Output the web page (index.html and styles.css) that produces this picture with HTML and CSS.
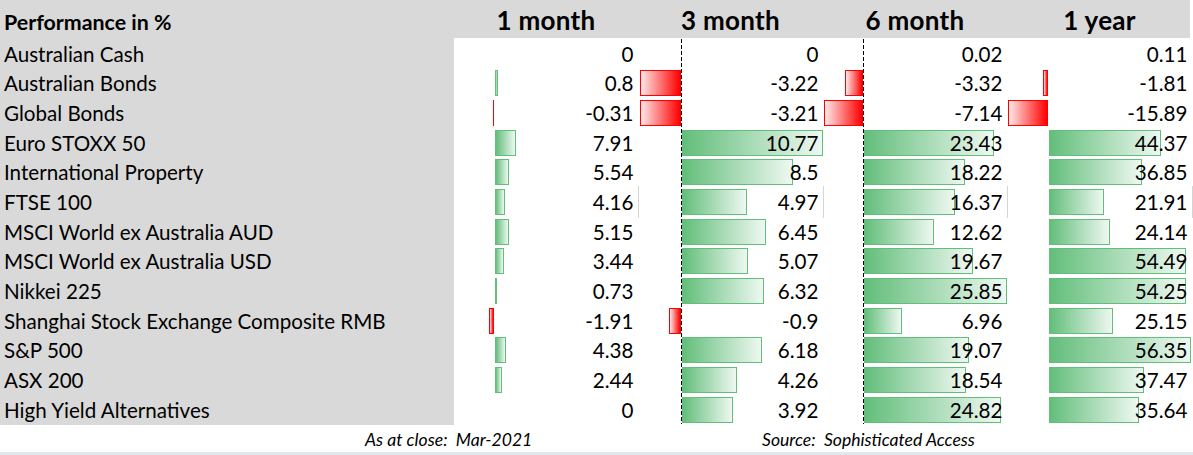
FILE: index.html
```html
<!DOCTYPE html>
<html>
<head>
<meta charset="utf-8">
<link rel="stylesheet" href="styles.css">
</head>
<body>
<div class="sheet">
  <div class="row head">
    <div class="htitle">Performance in %</div>
    <div class="hcol">1 month</div>
    <div class="hcol">3 month</div>
    <div class="hcol">6 month</div>
    <div class="hcol">1 year</div>
  </div>
  <div class="body">
    <div class="row">
      <div class="label">Australian Cash</div>
      <div class="cell c1"><div class="track"><div class="neg"></div><div class="axis"></div><div class="pos"></div></div><span class="val">0</span></div>
      <div class="cell c2"><div class="track"><div class="neg"></div><div class="axis"></div><div class="pos"></div></div><span class="val">0</span></div>
      <div class="cell c3"><div class="track"><div class="neg"></div><div class="axis"></div><div class="pos"></div></div><span class="val">0.02</span></div>
      <div class="cell c4"><div class="track"><div class="neg"></div><div class="axis"></div><div class="pos"></div></div><span class="val">0.11</span></div>
    </div>
    <div class="row">
      <div class="label">Australian Bonds</div>
      <div class="cell c1"><div class="track"><div class="neg"></div><div class="axis"></div><div class="pos"><div class="bar up" style="width:3px"></div></div></div><span class="val">0.8</span></div>
      <div class="cell c2"><div class="track"><div class="neg"><div class="bar down" style="width:41px"></div></div><div class="axis"></div><div class="pos"></div></div><span class="val">-3.22</span></div>
      <div class="cell c3"><div class="track"><div class="neg"><div class="bar down" style="width:18px"></div></div><div class="axis"></div><div class="pos"></div></div><span class="val">-3.32</span></div>
      <div class="cell c4"><div class="track"><div class="neg"><div class="bar down" style="width:5px"></div></div><div class="axis"></div><div class="pos"></div></div><span class="val">-1.81</span></div>
    </div>
    <div class="row">
      <div class="label">Global Bonds</div>
      <div class="cell c1"><div class="track"><div class="neg"><div class="bar down thin" style="width:1px"></div></div><div class="axis"></div><div class="pos"></div></div><span class="val">-0.31</span></div>
      <div class="cell c2"><div class="track"><div class="neg"><div class="bar down" style="width:41px"></div></div><div class="axis"></div><div class="pos"></div></div><span class="val">-3.21</span></div>
      <div class="cell c3"><div class="track"><div class="neg"><div class="bar down" style="width:39px"></div></div><div class="axis"></div><div class="pos"></div></div><span class="val">-7.14</span></div>
      <div class="cell c4"><div class="track"><div class="neg"><div class="bar down" style="width:40px"></div></div><div class="axis"></div><div class="pos"></div></div><span class="val">-15.89</span></div>
    </div>
    <div class="row">
      <div class="label">Euro STOXX 50</div>
      <div class="cell c1"><div class="track"><div class="neg"></div><div class="axis"></div><div class="pos"><div class="bar up" style="width:21px"></div></div></div><span class="val">7.91</span></div>
      <div class="cell c2"><div class="track"><div class="neg"></div><div class="axis"></div><div class="pos"><div class="bar up" style="width:141px"></div></div></div><span class="val">10.77</span></div>
      <div class="cell c3"><div class="track"><div class="neg"></div><div class="axis"></div><div class="pos"><div class="bar up" style="width:130px"></div></div></div><span class="val">23.43</span></div>
      <div class="cell c4"><div class="track"><div class="neg"></div><div class="axis"></div><div class="pos"><div class="bar up" style="width:112px"></div></div></div><span class="val">44.37</span></div>
    </div>
    <div class="row">
      <div class="label">International Property</div>
      <div class="cell c1"><div class="track"><div class="neg"></div><div class="axis"></div><div class="pos"><div class="bar up" style="width:14px"></div></div></div><span class="val">5.54</span></div>
      <div class="cell c2"><div class="track"><div class="neg"></div><div class="axis"></div><div class="pos"><div class="bar up" style="width:111px"></div></div></div><span class="val">8.5</span></div>
      <div class="cell c3"><div class="track"><div class="neg"></div><div class="axis"></div><div class="pos"><div class="bar up" style="width:101px"></div></div></div><span class="val">18.22</span></div>
      <div class="cell c4"><div class="track"><div class="neg"></div><div class="axis"></div><div class="pos"><div class="bar up" style="width:93px"></div></div></div><span class="val">36.85</span></div>
    </div>
    <div class="row sel">
      <div class="label">FTSE 100</div>
      <div class="cell c1"><div class="track"><div class="neg"></div><div class="axis"></div><div class="pos"><div class="bar up" style="width:10px"></div></div></div><span class="val">4.16</span></div>
      <div class="cell c2"><div class="track"><div class="neg"></div><div class="axis"></div><div class="pos"><div class="bar up" style="width:65px"></div></div></div><span class="val">4.97</span></div>
      <div class="cell c3"><div class="track"><div class="neg"></div><div class="axis"></div><div class="pos"><div class="bar up" style="width:91px"></div></div></div><span class="val">16.37</span></div>
      <div class="cell c4"><div class="track"><div class="neg"></div><div class="axis"></div><div class="pos"><div class="bar up" style="width:55px"></div></div></div><span class="val">21.91</span></div>
    </div>
    <div class="row">
      <div class="label">MSCI World ex Australia AUD</div>
      <div class="cell c1"><div class="track"><div class="neg"></div><div class="axis"></div><div class="pos"><div class="bar up" style="width:14px"></div></div></div><span class="val">5.15</span></div>
      <div class="cell c2"><div class="track"><div class="neg"></div><div class="axis"></div><div class="pos"><div class="bar up" style="width:84px"></div></div></div><span class="val">6.45</span></div>
      <div class="cell c3"><div class="track"><div class="neg"></div><div class="axis"></div><div class="pos"><div class="bar up" style="width:70px"></div></div></div><span class="val">12.62</span></div>
      <div class="cell c4"><div class="track"><div class="neg"></div><div class="axis"></div><div class="pos"><div class="bar up" style="width:61px"></div></div></div><span class="val">24.14</span></div>
    </div>
    <div class="row">
      <div class="label">MSCI World ex Australia USD</div>
      <div class="cell c1"><div class="track"><div class="neg"></div><div class="axis"></div><div class="pos"><div class="bar up" style="width:9px"></div></div></div><span class="val">3.44</span></div>
      <div class="cell c2"><div class="track"><div class="neg"></div><div class="axis"></div><div class="pos"><div class="bar up" style="width:66px"></div></div></div><span class="val">5.07</span></div>
      <div class="cell c3"><div class="track"><div class="neg"></div><div class="axis"></div><div class="pos"><div class="bar up" style="width:109px"></div></div></div><span class="val">19.67</span></div>
      <div class="cell c4"><div class="track"><div class="neg"></div><div class="axis"></div><div class="pos"><div class="bar up" style="width:137px"></div></div></div><span class="val">54.49</span></div>
    </div>
    <div class="row">
      <div class="label">Nikkei 225</div>
      <div class="cell c1"><div class="track"><div class="neg"></div><div class="axis"></div><div class="pos"><div class="bar up" style="width:2px"></div></div></div><span class="val">0.73</span></div>
      <div class="cell c2"><div class="track"><div class="neg"></div><div class="axis"></div><div class="pos"><div class="bar up" style="width:82px"></div></div></div><span class="val">6.32</span></div>
      <div class="cell c3"><div class="track"><div class="neg"></div><div class="axis"></div><div class="pos"><div class="bar up" style="width:143px"></div></div></div><span class="val">25.85</span></div>
      <div class="cell c4"><div class="track"><div class="neg"></div><div class="axis"></div><div class="pos"><div class="bar up" style="width:137px"></div></div></div><span class="val">54.25</span></div>
    </div>
    <div class="row">
      <div class="label">Shanghai Stock Exchange Composite RMB</div>
      <div class="cell c1"><div class="track"><div class="neg"><div class="bar down" style="width:5px"></div></div><div class="axis"></div><div class="pos"></div></div><span class="val">-1.91</span></div>
      <div class="cell c2"><div class="track"><div class="neg"><div class="bar down" style="width:12px"></div></div><div class="axis"></div><div class="pos"></div></div><span class="val">-0.9</span></div>
      <div class="cell c3"><div class="track"><div class="neg"></div><div class="axis"></div><div class="pos"><div class="bar up" style="width:38px"></div></div></div><span class="val">6.96</span></div>
      <div class="cell c4"><div class="track"><div class="neg"></div><div class="axis"></div><div class="pos"><div class="bar up" style="width:64px"></div></div></div><span class="val">25.15</span></div>
    </div>
    <div class="row">
      <div class="label">S&amp;P 500</div>
      <div class="cell c1"><div class="track"><div class="neg"></div><div class="axis"></div><div class="pos"><div class="bar up" style="width:11px"></div></div></div><span class="val">4.38</span></div>
      <div class="cell c2"><div class="track"><div class="neg"></div><div class="axis"></div><div class="pos"><div class="bar up" style="width:80px"></div></div></div><span class="val">6.18</span></div>
      <div class="cell c3"><div class="track"><div class="neg"></div><div class="axis"></div><div class="pos"><div class="bar up" style="width:105px"></div></div></div><span class="val">19.07</span></div>
      <div class="cell c4"><div class="track"><div class="neg"></div><div class="axis"></div><div class="pos"><div class="bar up" style="width:142px"></div></div></div><span class="val">56.35</span></div>
    </div>
    <div class="row">
      <div class="label">ASX 200</div>
      <div class="cell c1"><div class="track"><div class="neg"></div><div class="axis"></div><div class="pos"><div class="bar up" style="width:7px"></div></div></div><span class="val">2.44</span></div>
      <div class="cell c2"><div class="track"><div class="neg"></div><div class="axis"></div><div class="pos"><div class="bar up" style="width:55px"></div></div></div><span class="val">4.26</span></div>
      <div class="cell c3"><div class="track"><div class="neg"></div><div class="axis"></div><div class="pos"><div class="bar up" style="width:102px"></div></div></div><span class="val">18.54</span></div>
      <div class="cell c4"><div class="track"><div class="neg"></div><div class="axis"></div><div class="pos"><div class="bar up" style="width:95px"></div></div></div><span class="val">37.47</span></div>
    </div>
    <div class="row">
      <div class="label">High Yield Alternatives</div>
      <div class="cell c1"><div class="track"><div class="neg"></div><div class="axis"></div><div class="pos"></div></div><span class="val">0</span></div>
      <div class="cell c2"><div class="track"><div class="neg"></div><div class="axis"></div><div class="pos"><div class="bar up" style="width:51px"></div></div></div><span class="val">3.92</span></div>
      <div class="cell c3"><div class="track"><div class="neg"></div><div class="axis"></div><div class="pos"><div class="bar up" style="width:137px"></div></div></div><span class="val">24.82</span></div>
      <div class="cell c4"><div class="track"><div class="neg"></div><div class="axis"></div><div class="pos"><div class="bar up" style="width:90px"></div></div></div><span class="val">35.64</span></div>
    </div>
  </div>
  <div class="footer">
    <span class="note asat">As at close:&nbsp; Mar-2021</span>
    <span class="note source">Source:&nbsp; Sophisticated Access</span>
  </div>
</div>
</body>
</html>
```
FILE: styles.css
```css
html, body {
  margin: 0;
  padding: 0;
  background: #ffffff;
}

body {
  font-family: "Lato", "Liberation Sans", sans-serif;
  color: #000;
}

.sheet {
  width: 1193px;
  height: 455px;
  overflow: hidden;
}

.row {
  display: grid;
  grid-template-columns: 454px 184px 185px 184px 185px;
  height: 29.7px;
}

.head {
  height: 38px;
  width: 1190px;
  background: #d9d9d9;
  align-items: end;
}

.htitle {
  font-weight: 700;
  font-size: 21.4px;
  line-height: 1;
  padding-left: 4px;
  padding-bottom: 5px;
  white-space: nowrap;
}

.hcol {
  font-weight: 700;
  font-size: 26px;
  letter-spacing: 0.3px;
  line-height: 1;
  text-align: center;
  padding-bottom: 5px;
}

.body {
  background-image:
    repeating-linear-gradient(to bottom, #000 0 4px, transparent 4px 6px),
    repeating-linear-gradient(to bottom, #000 0 4px, transparent 4px 6px);
  background-size: 1px 100%, 1px 100%;
  background-position: 681px 1px, 863px 1px;
  background-repeat: no-repeat;
}

.label {
  background: #d9d9d9;
  font-size: 20.6px;
  line-height: 29.7px;
  padding-left: 4px;
  padding-top: 1.5px;
  white-space: nowrap;
}

.cell {
  display: grid;
  min-width: 0;
}

.cell > * {
  grid-area: 1 / 1;
}

.c1 { --ax: 40px; }
.c2 { --ax: 43px; }
.c3 { --ax: 40px; }
.c4 { --ax: 41px; }

.track {
  display: flex;
  align-items: center;
  min-width: 0;
}

.neg {
  flex: none;
  width: var(--ax);
  display: flex;
  justify-content: flex-end;
}

.axis {
  flex: none;
  width: 1px;
  align-self: stretch;
}

.pos {
  flex: 1;
  min-width: 0;
  display: flex;
}

.bar {
  flex: none;
  height: 26px;
  box-sizing: border-box;
}

.up {
  border: 1px solid #63be7b;
  background: linear-gradient(to right, #63be7b, #eef8f1);
}

.down {
  border: 1px solid #ff0000;
  background: linear-gradient(to left, #ff0000, #ffe8e8);
}

.down.thin {
  border: none;
  border-left: 1px solid #ff0000;
}

.val {
  justify-self: end;
  font-size: 20.6px;
  line-height: 29.7px;
  padding-top: 1.5px;
  padding-right: 4.5px;
}

.sel .cell {
  border-right: 1px solid #d4d4d4;
  margin-right: -1px;
}

.footer {
  height: 28px;
  border-bottom: 3px solid #e3e8ee;
  display: flex;
  align-items: flex-end;
  font-style: italic;
  font-size: 17.6px;
  line-height: 1;
  white-space: nowrap;
}

.note {
  padding-bottom: 3px;
}

.asat {
  margin-left: 365px;
  width: 397px;
}

.source {
  flex: none;
}
```
